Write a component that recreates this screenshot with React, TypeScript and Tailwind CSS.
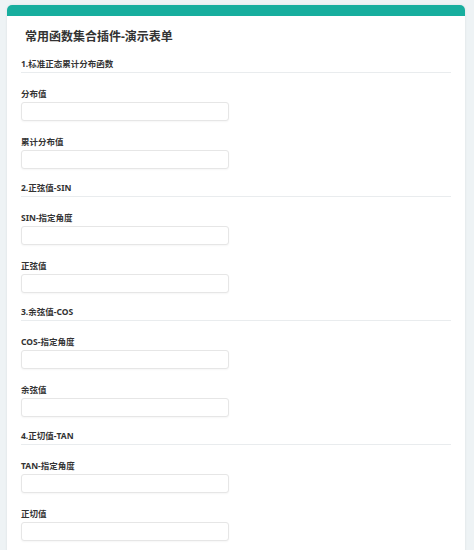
const sections = [
  { title: "1.标准正态累计分布函数", fields: ["分布值", "累计分布值"] },
  { title: "2.正弦值-SIN", fields: ["SIN-指定角度", "正弦值"] },
  { title: "3.余弦值-COS", fields: ["COS-指定角度", "余弦值"] },
  { title: "4.正切值-TAN", fields: ["TAN-指定角度", "正切值"] },
];

function Field({ label }: { label: string }) {
  return (
    <div className="mt-[14px]">
      <label className="block text-[8.5px] font-bold leading-[14px] text-[#333]">{label}</label>
      <input
        type="text"
        className="mt-px block h-[19px] w-[208px] rounded-[3px] border border-[#e6e6e6] bg-white px-2 text-[9px] shadow-[0_1px_2px_rgba(0,0,0,0.04)] outline-none"
      />
    </div>
  );
}

export default function App() {
  return (
    <div
      className="min-h-[550px] bg-[#eef3f5] pt-[5px]"
      style={{ fontFamily: '"Noto Sans", "Noto Sans CJK SC", sans-serif' }}
    >
      <div className="ml-[7px] w-[458px] overflow-hidden rounded-t-[5px] bg-white pb-6 shadow-[0_0_3px_rgba(0,0,0,0.08)]">
        <div className="h-[11px] bg-[#17ae9e]" />
        <div className="px-[14px]">
          <h1 className="mt-[11px] pl-1 text-[12px] font-bold leading-[20px] text-[#333]">常用函数集合插件-演示表单</h1>
          {sections.map((s, i) => (
            <section key={s.title}>
              <h2
                className={`${i === 0 ? "mt-[9px]" : "mt-[11px]"} border-b border-[#e9ecee] text-[8.5px] font-bold leading-[16px] text-[#333]`}
              >
                {s.title}
              </h2>
              {s.fields.map((f) => (
                <Field key={f} label={f} />
              ))}
            </section>
          ))}
        </div>
      </div>
    </div>
  );
}
